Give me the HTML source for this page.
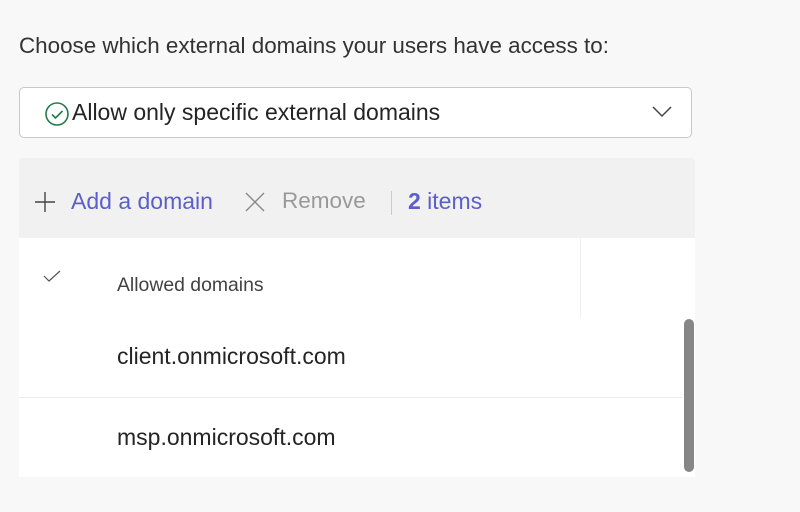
<!DOCTYPE html>
<html><head><style>
*{margin:0;padding:0;box-sizing:border-box}
body{width:800px;height:512px;background:#f8f8f8;font-family:"Liberation Sans",sans-serif;position:relative;overflow:hidden;color:#242424}
.a{position:absolute;white-space:nowrap}
</style></head><body>
<div class="a" style="left:19px;top:33px;font-size:22.4px;color:#333">Choose which external domains your users have access to:</div>
<div class="a" style="left:19px;top:87px;width:673px;height:51px;background:#fff;border:1px solid #c8c8c8;border-radius:5px"></div>
<svg class="a" style="left:44px;top:101px" width="26" height="26" viewBox="0 0 26 26"><circle cx="13" cy="13" r="11" fill="none" stroke="#237b4b" stroke-width="1.6"/><path d="M8 13.5l3.5 3.5 7-7" fill="none" stroke="#237b4b" stroke-width="1.6"/></svg>
<div class="a" style="left:72px;top:99px;font-size:23px;color:#242424">Allow only specific external domains</div>
<svg class="a" style="left:651px;top:104px" width="22" height="14" viewBox="0 0 22 14"><path d="M2 3l9 9 9-9" fill="none" stroke="#444" stroke-width="1.5"/></svg>
<div class="a" style="left:19px;top:158px;width:676px;height:80px;background:#f1f1f1;border-radius:4px 4px 0 0"></div>
<svg class="a" style="left:34px;top:191px" width="22" height="22" viewBox="0 0 22 22"><path d="M11 1v20M1 11h20" stroke="#444" stroke-width="1.4"/></svg>
<div class="a" style="left:71px;top:188px;font-size:23px;color:#5b5fc7">Add a domain</div>
<svg class="a" style="left:244px;top:191px" width="22" height="22" viewBox="0 0 22 22"><path d="M2 2l18 18M20 2L2 20" stroke="#888" stroke-width="1.4"/></svg>
<div class="a" style="left:282px;top:188px;font-size:22.5px;color:#999">Remove</div>
<div class="a" style="left:391px;top:191px;width:1px;height:24px;background:#ccc"></div>
<div class="a" style="left:408px;top:188px;font-size:23px;color:#5b5fc7"><b>2</b> items</div>
<div class="a" style="left:19px;top:238px;width:676px;height:239px;background:#fff"></div>
<div class="a" style="left:580px;top:238px;width:1px;height:80px;background:#eee"></div>
<svg class="a" style="left:42px;top:270px" width="20" height="14" viewBox="0 0 20 14"><path d="M2 6l5 5 11-10" fill="none" stroke="#555" stroke-width="1.2"/></svg>
<div class="a" style="left:117px;top:274px;font-size:19.4px;color:#424242">Allowed domains</div>
<div class="a" style="left:117px;top:343px;font-size:23px;color:#242424">client.onmicrosoft.com</div>
<div class="a" style="left:19px;top:397px;width:664px;height:1px;background:#ededed"></div>
<div class="a" style="left:117px;top:424px;font-size:23px;color:#242424">msp.onmicrosoft.com</div>
<div class="a" style="left:684px;top:319px;width:10px;height:153px;background:#868686;border-radius:5px"></div>
</body></html>
